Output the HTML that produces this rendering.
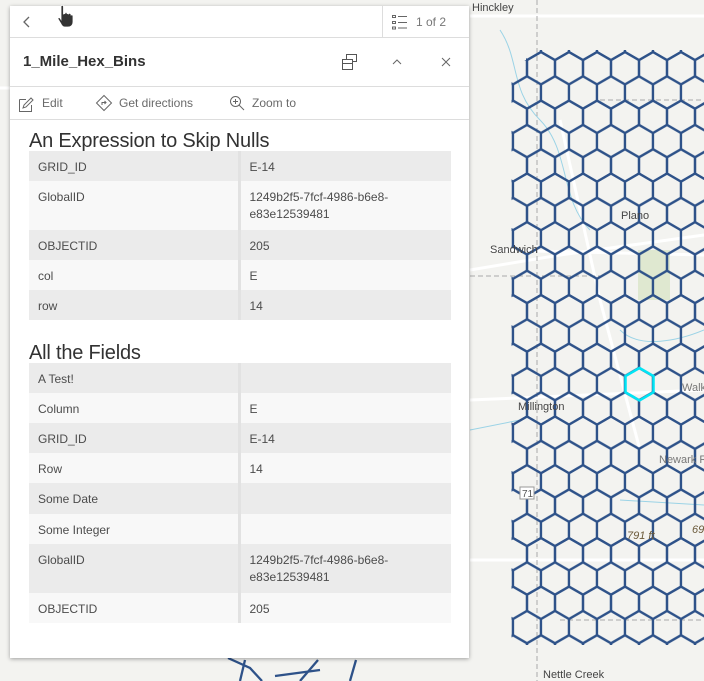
<!DOCTYPE html>
<html><head><meta charset="utf-8"><style>
*{margin:0;padding:0;box-sizing:border-box}
body{width:704px;height:681px;overflow:hidden;background:#f3f3f0;font-family:"Liberation Sans",sans-serif;position:relative}
#map{position:absolute;left:0;top:0}
.panel{position:absolute;left:10px;top:6px;width:459px;height:652px;background:#fff;box-shadow:0 1px 4px rgba(0,0,0,.35)}
.hdr{height:32px;border-bottom:1px solid #ddd;position:relative}
.title{height:49px;border-bottom:1px solid #ddd;position:relative}
.title b{position:absolute;left:13px;top:15px;font-size:15px;color:#323232}
.acts{height:33px;border-bottom:1px solid #ddd;position:relative;font-size:12px;color:#6a6a6a}
.acts span{position:absolute;top:9px}
h2{font-weight:300;font-size:20px;color:#323232;position:absolute;left:19px;letter-spacing:-0.2px}
table{position:absolute;left:19px;width:422px;border-collapse:collapse;font-size:12px;color:#4c4c4c}
td{vertical-align:top;padding:8px 0 0 9px;line-height:17px}
td:first-child{width:210px;border-right:3px solid #e2e2e2}
td:last-child{padding-left:9px}
tr:nth-child(odd){background:#ebebeb}
tr:nth-child(even){background:#f8f8f8}
tr{height:30px}
tr.t{height:49px}
</style></head><body>
<svg id="map" width="704" height="681">
<defs>
<path id="h" d="M14 0L28 8.1L28 24.3L14 32.4L0 24.3L0 8.1Z"/>
<pattern id="hx" patternUnits="userSpaceOnUse" x="513" y="52" width="28" height="48.6">
<g fill="none" stroke="#2e5289" stroke-width="2.3">
<use href="#h" x="14" y="0"/><use href="#h" x="-14" y="0"/>
<use href="#h" x="14" y="48.6"/><use href="#h" x="-14" y="48.6"/>
<use href="#h" x="0" y="24.3"/><use href="#h" x="0" y="-24.3"/>
<use href="#h" x="28" y="24.3"/><use href="#h" x="28" y="-24.3"/>
</g></pattern>
<clipPath id="cp"><rect x="526" y="50" width="200" height="11"/><rect x="511.5" y="60" width="200" height="585"/></clipPath>
</defs>
<g stroke="#fff" stroke-width="3" fill="none">
<path d="M470 16L704 16"/><path d="M470 270L560 255L704 235"/><path d="M490 250L704 255"/><path d="M470 400L704 390"/><path d="M470 560L704 560"/><path d="M560 120L600 300L640 450"/><path d="M0 88L10 88"/>
</g>
<g stroke="#aaa" stroke-width="1" stroke-dasharray="5 3" fill="none"><path d="M537 0L537 681"/><path d="M470 276L600 276"/><path d="M600 100L704 100"/><path d="M560 620L704 620"/></g>
<g stroke="#9bd3e6" stroke-width="1" fill="none"><path d="M500 30C520 60 510 90 540 120S560 200 590 230"/><path d="M620 330C640 350 680 340 704 330"/><path d="M470 430L520 420"/><path d="M620 500L704 505"/></g>
<rect x="638" y="250" width="32" height="50" fill="#dfe8d0"/>
<rect x="0" y="0" width="704" height="681" fill="url(#hx)" clip-path="url(#cp)"/>
<path d="M639.5 368L653.5 376.1L653.5 392.3L639.5 400.4L625.5 392.3L625.5 376.1Z" fill="none" stroke="#00e5f5" stroke-width="2.5"/>
<g stroke="#2e5289" stroke-width="2.3" fill="none"><path d="M228 658L250 668L262 681"/><path d="M245 660L240 681"/><path d="M318 660L300 681"/><path d="M356 660L350 681"/><path d="M275 676L320 670"/></g>
<g font-size="11" fill="#444" font-family="Liberation Sans,sans-serif">
<text x="472" y="11">Hinckley</text><text x="621" y="219">Plano</text><text x="490" y="253">Sandwich</text><text x="518" y="410">Millington</text><text x="543" y="678">Nettle Creek</text><text x="659" y="463" fill="#777">Newark R</text><text x="682" y="391" fill="#777">Walk</text><text x="627" y="539" font-style="italic" fill="#6b5a3a">791 ft</text><text x="692" y="533" font-style="italic" fill="#6b5a3a">69</text>
</g>
<rect x="520" y="487" width="14" height="12" fill="#fff" stroke="#999"/><text x="522" y="497" font-size="10" fill="#555">71</text>
</svg>
<div class="panel">
<div class="hdr">
<svg width="20" height="20" style="position:absolute;left:7px;top:6px"><path d="M12 5L7 10L12 15" fill="none" stroke="#666" stroke-width="1.3"/></svg>
<div style="position:absolute;left:372px;top:0;width:1px;height:32px;background:#ddd"></div>
<svg width="18" height="18" style="position:absolute;left:381px;top:7px"><g fill="none" stroke="#666" stroke-width="1"><rect x="1.5" y="2.5" width="3" height="2"/><rect x="1.5" y="8.5" width="3" height="2"/><rect x="1.5" y="14" width="3" height="2"/><path d="M7 3.5H16M7 9.5H16M7 15H16"/></g></svg>
<span style="position:absolute;left:406px;top:9px;font-size:12px;color:#777">1 of 2</span>
</div>
<div class="title"><b>1_Mile_Hex_Bins</b>
<svg width="18" height="18" style="position:absolute;left:331px;top:15px"><g fill="none" stroke="#555" stroke-width="1"><rect x="5.5" y="1.5" width="10" height="7"/><rect x="1.5" y="6.5" width="10" height="10" fill="#fff"/><path d="M1.5 10.5H11.5"/></g></svg>
<svg width="12" height="12" style="position:absolute;left:381px;top:18px"><path d="M2 8L6 4L10 8" fill="none" stroke="#666" stroke-width="1"/></svg>
<svg width="12" height="12" style="position:absolute;left:430px;top:18px"><path d="M2 2L10 10M10 2L2 10" fill="none" stroke="#666" stroke-width="1"/></svg>
</div>
<div class="acts">
<svg width="16" height="16" style="position:absolute;left:8px;top:9px"><g fill="none" stroke="#666" stroke-width="1"><path d="M1.5 3.5H8M1.5 3.5V15.5H13.5V9"/><path d="M5 12L6 9L13 2L15 4L8 11Z"/></g></svg>
<span style="left:32px">Edit</span>
<svg width="18" height="18" style="position:absolute;left:85px;top:7px"><g fill="none" stroke="#666" stroke-width="1"><path d="M9 1.5L16.5 9L9 16.5L1.5 9Z"/><path d="M7 11V8.5H11M9.5 7L11 8.5L9.5 10"/></g></svg>
<span style="left:109px">Get directions</span>
<svg width="17" height="17" style="position:absolute;left:219px;top:8px"><g fill="none" stroke="#666" stroke-width="1"><circle cx="6.5" cy="6.5" r="5"/><path d="M10 10L15 15M4 6.5H9M6.5 4V9"/></g></svg>
<span style="left:242px">Zoom to</span>
</div>
<h2 style="top:124px">An Expression to Skip Nulls</h2>
<table style="top:145px">
<tr><td>GRID_ID</td><td>E-14</td></tr>
<tr class="t"><td>GlobalID</td><td>1249b2f5-7fcf-4986-b6e8-<br>e83e12539481</td></tr>
<tr><td>OBJECTID</td><td>205</td></tr>
<tr><td>col</td><td>E</td></tr>
<tr><td>row</td><td>14</td></tr>
</table>
<h2 style="top:336px">All the Fields</h2>
<table style="top:357px">
<tr><td>A Test!</td><td></td></tr>
<tr><td>Column</td><td>E</td></tr>
<tr><td>GRID_ID</td><td>E-14</td></tr>
<tr><td>Row</td><td>14</td></tr>
<tr style="height:31px"><td>Some Date</td><td></td></tr>
<tr><td>Some Integer</td><td></td></tr>
<tr class="t"><td>GlobalID</td><td>1249b2f5-7fcf-4986-b6e8-<br>e83e12539481</td></tr>
<tr><td>OBJECTID</td><td>205</td></tr>
</table>
</div>
<svg width="20" height="26" style="position:absolute;left:56px;top:4px"><path d="M5 2.5C5 1 7.5 1 7.5 2.5V10L9 9.5C9 8 11 8 11 9.5L12.5 10C12.5 9 15 9 15 10.5V11.5C15 10.5 17 10.5 17 12V18C17 21 15 23 12 23H9C7 23 6 22 5 20L2 15C1.5 14 3 13 4 14L5 15.5Z" fill="#333" stroke="#fff" stroke-width="0.8"/></svg>
</body></html>
